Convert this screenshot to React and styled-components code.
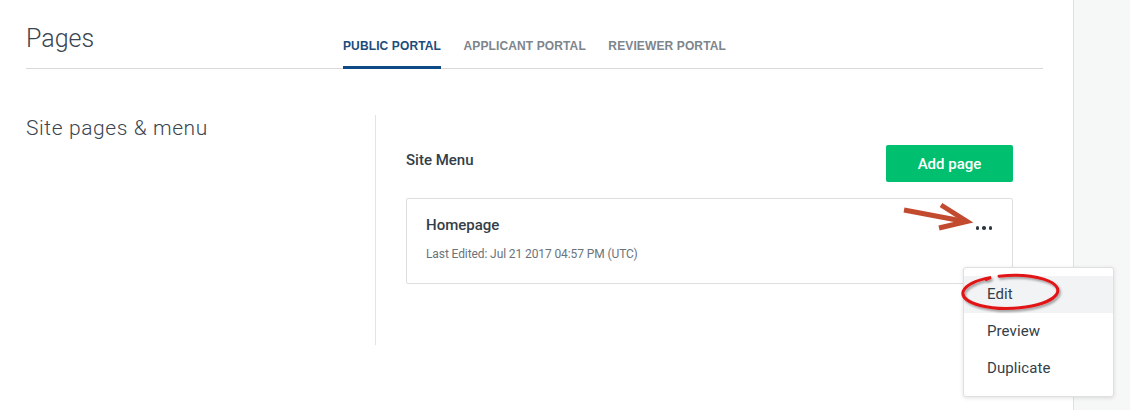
import React from "react";
import styled, { createGlobalStyle } from "styled-components";

const Global = createGlobalStyle`
  html, body { margin: 0; padding: 0; background: #fff; }
  body { font-family: Roboto, "Noto Sans", Arial, sans-serif; color: #333e48; }
  * { box-sizing: border-box; }
`;

const Shell = styled.div`
  display: flex;
  width: 1130px;
  height: 410px;
  overflow: hidden;
`;

const Main = styled.div`
  width: 1073px;
  flex: none;
  padding: 0 30px 0 26px;
`;

const Sidebar = styled.aside`
  flex: 1;
  background: #f6f7f7;
  border-left: 1px solid #dfe1e1;
`;

const Header = styled.header`
  display: flex;
  align-items: flex-end;
  height: 69px;
  border-bottom: 1px solid #d9d9d9;
`;

const Title = styled.h1`
  margin: 0;
  width: 317px;
  padding-bottom: 13px;
  font-family: Roboto, sans-serif;
  font-weight: 300;
  font-size: 25px;
  line-height: 32px;
  color: #3a4550;
`;

const Tabs = styled.nav`
  display: flex;
  gap: 22.5px;
`;

const Tab = styled.a`
  display: block;
  font-family: "Liberation Sans", Arial, sans-serif;
  font-weight: 700;
  font-size: 12px;
  letter-spacing: 0.12px;
  line-height: 14px;
  padding-bottom: 13px;
  margin-bottom: -1px;
  border-bottom: 3px solid ${(p) => (p.$active ? "#0d4a86" : "transparent")};
  color: ${(p) => (p.$active ? "#1b4c7c" : "#7d858c")};
  text-decoration: none;
  cursor: pointer;
`;

const Body = styled.div`
  display: flex;
  margin-top: 46px;
`;

const LeftCol = styled.div`
  width: 349px;
  flex: none;
`;

const SectionTitle = styled.h2`
  margin: -1px 0 0;
  font-family: Roboto, sans-serif;
  font-weight: 300;
  font-size: 21px;
  letter-spacing: 0.6px;
  line-height: 28px;
  color: #3a4550;
`;

const RightCol = styled.div`
  flex: 1;
  border-left: 1px solid #e3e3e3;
  padding: 30px 30px 0 30px;
  height: 230px;
`;

const MenuHead = styled.div`
  display: flex;
  justify-content: space-between;
  align-items: flex-start;
`;

const MenuLabel = styled.div`
  margin-top: 5px;
  font-weight: 500;
  font-size: 15px;
  line-height: 20px;
  color: #333e48;
`;

const PrimaryButton = styled.button`
  width: 127px;
  height: 37px;
  border: none;
  border-radius: 2px;
  background: #00bf6f;
  color: #fff;
  font-family: Roboto, sans-serif;
  font-weight: 500;
  font-size: 15px;
  cursor: pointer;
`;

const Card = styled.div`
  position: relative;
  margin-top: 16px;
  border: 1px solid #dedede;
  border-radius: 2px;
  padding: 16px 20px 21px 20px;
`;

const CardTop = styled.div`
  display: flex;
  justify-content: space-between;
  align-items: center;
`;

const CardTitle = styled.div`
  margin-left: -1px;
  font-weight: 500;
  font-size: 15px;
  line-height: 20px;
  color: #333e48;
`;

const CardMeta = styled.div`
  margin-top: 11px;
  margin-left: -1px;
  font-size: 12px;
  letter-spacing: -0.1px;
  line-height: 16px;
  color: #6b737a;
`;

const DotsButton = styled.button`
  display: flex;
  gap: 3px;
  padding: 0;
  margin-top: 6px;
  border: none;
  background: none;
  cursor: pointer;
`;

const Dot = styled.span`
  width: 3.5px;
  height: 3.5px;
  border-radius: 50%;
  background: #2f3840;
`;

const Annotation = styled.svg`
  position: absolute;
  overflow: visible;
  pointer-events: none;
`;

const Dropdown = styled.ul`
  position: absolute;
  top: 68px;
  right: -102px;
  width: 151px;
  margin: 0;
  padding: 8px 0 9px;
  list-style: none;
  background: #fff;
  border: 1px solid #e0e0e0;
  border-radius: 3px;
  box-shadow: 0 1px 4px rgba(0, 0, 0, 0.12);
  z-index: 2;
`;

const DropItem = styled.li`
  position: relative;
  height: 37px;
  line-height: 37px;
  padding-left: 23px;
  font-size: 15px;
  letter-spacing: 0.1px;
  color: #333e48;
  background: ${(p) => (p.$active ? "#f2f3f5" : "transparent")};
`;

export default function App() {
  return (
    <>
      <Global />
      <Shell>
        <Main>
          <Header>
            <Title>Pages</Title>
            <Tabs>
              <Tab $active>PUBLIC PORTAL</Tab>
              <Tab>APPLICANT PORTAL</Tab>
              <Tab>REVIEWER PORTAL</Tab>
            </Tabs>
          </Header>
          <Body>
            <LeftCol>
              <SectionTitle>Site pages &amp; menu</SectionTitle>
            </LeftCol>
            <RightCol>
              <MenuHead>
                <MenuLabel>Site Menu</MenuLabel>
                <PrimaryButton>Add page</PrimaryButton>
              </MenuHead>
              <Card>
                <CardTop>
                  <CardTitle>Homepage</CardTitle>
                  <DotsButton aria-label="More">
                    <Dot />
                    <Dot />
                    <Dot />
                  </DotsButton>
                </CardTop>
                <CardMeta>Last Edited: Jul 21 2017 04:57 PM (UTC)</CardMeta>
                <Annotation
                  width="72"
                  height="30"
                  viewBox="0 0 72 30"
                  style={{ left: 496, top: 4 }}
                >
                  <g stroke="#c24a2f" strokeWidth="5" strokeLinecap="butt" fill="none" strokeLinejoin="miter">
                    <path d="M1 7 L62 18.5" />
                    <path d="M38 2 L64 18.5 L36 25" />
                  </g>
                </Annotation>
                <Dropdown>
                  <DropItem $active>
                    Edit
                    <Annotation
                      width="104"
                      height="44"
                      viewBox="0 0 104 44"
                      style={{ left: -9, top: -4 }}
                    >
                      <defs>
                        <filter id="sh" x="-10%" y="-20%" width="130%" height="150%">
                          <feDropShadow dx="1.5" dy="2" stdDeviation="1.2" floodColor="#000" floodOpacity="0.35" />
                        </filter>
                      </defs>
                      <path
                        filter="url(#sh)"
                        d="M44 4.2 A 47.5 16.5 -2 1 1 36 5.4 L 31 7.5"
                        fill="none"
                        stroke="#e01616"
                        strokeWidth="3"
                        strokeLinecap="round"
                      />
                    </Annotation>
                  </DropItem>
                  <DropItem>Preview</DropItem>
                  <DropItem>Duplicate</DropItem>
                </Dropdown>
              </Card>
            </RightCol>
          </Body>
        </Main>
        <Sidebar />
      </Shell>
    </>
  );
}
